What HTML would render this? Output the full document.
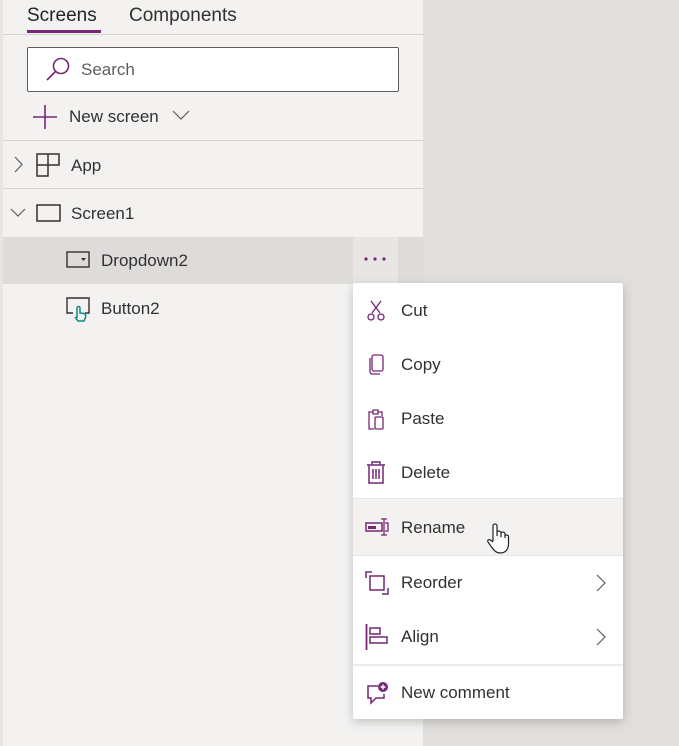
<!DOCTYPE html>
<html><head><style>
*{margin:0;padding:0;box-sizing:border-box}
body{width:679px;height:746px;background:#e1dfdd;font-family:"Liberation Sans",sans-serif;color:#323130;position:relative;overflow:hidden}
.panel{position:absolute;left:0;top:0;width:423px;height:746px;background:#f3f2f1;box-shadow:inset 3px 0 0 #e8e6e4}
.abs{position:absolute}
.t{position:absolute;font-size:17px;line-height:20px}
.hr{position:absolute;left:3px;width:420px;height:1px;background:#d6d4d2}
.menu{position:absolute;left:353px;top:283px;width:270px;height:436px;background:#fff;border-radius:2px;box-shadow:0 3px 10px rgba(0,0,0,.2)}
.mi{position:absolute;left:0;width:270px;font-size:17px}
.mi span{position:absolute;left:48px;line-height:20px}
.mi svg{position:absolute;left:12px}
.mi svg.chev{left:242px}
</style></head><body>
<div class="panel">
 <div class="t" style="left:27px;top:6px;font-size:19px;color:#252423">Screens</div>
 <div class="abs" style="left:27px;top:30px;width:74px;height:3px;background:#742774"></div>
 <div class="t" style="left:129px;top:6px;font-size:19px">Components</div>
 <div class="hr" style="top:34px"></div>
 <div class="abs" style="left:27px;top:47px;width:372px;height:45px;background:#fff;border:1px solid #605e5c;border-radius:2px"></div>
 <svg class="abs" style="left:44px;top:56px" width="30" height="26"><circle cx="17" cy="10" r="7.5" fill="none" stroke="#742774" stroke-width="1.6"/><line x1="11.5" y1="15.5" x2="3" y2="24" stroke="#742774" stroke-width="1.6"/></svg>
 <div class="t" style="left:81px;top:60px;color:#605e5c">Search</div>
 <svg class="abs" style="left:31px;top:103px" width="28" height="28"><path d="M14 2V26M2 14H26" stroke="#742774" stroke-width="1.6"/></svg>
 <div class="t" style="left:69px;top:107px">New screen</div>
 <svg class="abs" style="left:171px;top:108px" width="20" height="14"><path d="M2 3L10 11L18 3" fill="none" stroke="#605e5c" stroke-width="1.2"/></svg>
 <div class="hr" style="top:140px"></div>
 <svg class="abs" style="left:12px;top:155px" width="12" height="20"><path d="M3 2L10 9.5L3 17" fill="none" stroke="#605e5c" stroke-width="1.2"/></svg>
 <svg class="abs" style="left:35px;top:152px" width="26" height="26"><path d="M2 2H24V13H13V24H2ZM2 13H13V2" fill="none" stroke="#323130" stroke-width="1.5"/></svg>
 <div class="t" style="left:71px;top:156px">App</div>
 <div class="hr" style="top:188px"></div>
 <svg class="abs" style="left:9px;top:206px" width="18" height="14"><path d="M2 3L9 10L16 3" fill="none" stroke="#605e5c" stroke-width="1.2"/></svg>
 <svg class="abs" style="left:35px;top:203px" width="28" height="20"><rect x="2" y="2" width="23" height="16" fill="none" stroke="#323130" stroke-width="1.5"/></svg>
 <div class="t" style="left:71px;top:204px">Screen1</div>
 <div class="abs" style="left:3px;top:237px;width:420px;height:47px;background:#dedcda"></div>
 <div class="abs" style="left:353px;top:237px;width:45px;height:47px;background:#e8e6e4"></div>
 <svg class="abs" style="left:362px;top:255px" width="26" height="8"><circle cx="4" cy="4" r="1.6" fill="#742774"/><circle cx="13" cy="4" r="1.6" fill="#742774"/><circle cx="22" cy="4" r="1.6" fill="#742774"/></svg>
 <svg class="abs" style="left:65px;top:250px" width="28" height="20"><rect x="2" y="2" width="22" height="15" fill="none" stroke="#323130" stroke-width="1.4"/><path d="M16 8H21L18.5 11Z" fill="#323130"/></svg>
 <div class="t" style="left:101px;top:251px">Dropdown2</div>
 <svg class="abs" style="left:65px;top:296px" width="28" height="28"><path d="M8 17H2V2H24V17H20" fill="none" stroke="#323130" stroke-width="1.4"/><path d="M12 22V12a1.5 1.5 0 0 1 3 0V17l4 0.5c2 .5 2 2 1.5 4L19 25H13L10 21" fill="none" stroke="#0b8a86" stroke-width="1.5"/></svg>
 <div class="t" style="left:101px;top:299px">Button2</div>
</div>
<div class="menu">
 <div class="abs" style="left:0;top:216px;width:270px;height:56px;background:#f3f2f1"></div>
 <div class="abs" style="left:0;top:215px;width:270px;height:1px;background:#e8e6e4"></div>
 <div class="abs" style="left:0;top:272px;width:270px;height:1px;background:#e8e6e4"></div>
 <div class="abs" style="left:0;top:381px;width:270px;height:2px;background:#edebe9"></div>
 <div class="mi" style="top:17px"><svg width="22" height="22"><path d="M6 1L15 13M16 1L7 13" stroke="#742774" stroke-width="1.3" fill="none"/><circle cx="6" cy="17" r="3" fill="none" stroke="#742774" stroke-width="1.3"/><circle cx="16" cy="17" r="3" fill="none" stroke="#742774" stroke-width="1.3"/></svg><span style="top:1px">Cut</span></div>
 <div class="mi" style="top:71px"><svg width="22" height="22"><rect x="7" y="1" width="11" height="16" rx="2" fill="none" stroke="#742774" stroke-width="1.3"/><path d="M5 4V18a2 2 0 0 0 2 2H15" fill="none" stroke="#742774" stroke-width="1.3"/></svg><span style="top:1px">Copy</span></div>
 <div class="mi" style="top:125px"><svg width="22" height="24"><path d="M8 4H4V21H9M13 4H17V8M8 2H13V6H8Z" fill="none" stroke="#742774" stroke-width="1.3"/><rect x="10" y="9" width="8" height="12" rx="1" fill="none" stroke="#742774" stroke-width="1.3"/></svg><span style="top:1px">Paste</span></div>
 <div class="mi" style="top:178px"><svg width="22" height="24"><path d="M2 4H20M7 4V1H15V4M4 4V22H18V4M8 8V18M11 8V18M14 8V18" fill="none" stroke="#742774" stroke-width="1.5"/></svg><span style="top:2px">Delete</span></div>
 <div class="mi" style="top:234px"><svg width="26" height="22"><rect x="1" y="6" width="16" height="8" fill="none" stroke="#742774" stroke-width="1.5"/><rect x="3" y="9" width="8" height="3" fill="#742774"/><path d="M16 2H22M16 18H22M19 2V18M20 6H23V14H20" fill="none" stroke="#742774" stroke-width="1.3"/></svg><span style="top:1px">Rename</span></div>
 <div class="mi" style="top:288px"><svg width="26" height="26"><path d="M1 7V1H7" fill="none" stroke="#742774" stroke-width="1.5"/><rect x="5" y="5" width="14" height="14" fill="none" stroke="#742774" stroke-width="1.5"/><path d="M17 23H23V17" fill="none" stroke="#742774" stroke-width="1.5"/></svg><span style="top:2px">Reorder</span><svg class="chev" width="12" height="20" style="top:2px"><path d="M2 2L10 10L2 18" fill="none" stroke="#605e5c" stroke-width="1.2"/></svg></div>
 <div class="mi" style="top:341px"><svg width="24" height="26"><path d="M1.5 0V26" stroke="#742774" stroke-width="1.8"/><rect x="5" y="4" width="10" height="6" fill="none" stroke="#742774" stroke-width="1.5"/><rect x="5" y="13" width="17" height="6" fill="none" stroke="#742774" stroke-width="1.5"/></svg><span style="top:3px">Align</span><svg class="chev" width="12" height="20" style="top:3px"><path d="M2 2L10 10L2 18" fill="none" stroke="#605e5c" stroke-width="1.2"/></svg></div>
 <div class="mi" style="top:398px"><svg width="26" height="26"><path d="M13 5H3V17H6V22L11 17H19V13" fill="none" stroke="#742774" stroke-width="1.5"/><circle cx="18" cy="6" r="5" fill="#742774"/><path d="M18 3.5V8.5M15.5 6H20.5" stroke="#fff" stroke-width="1.4"/></svg><span style="top:2px">New comment</span></div>
 <svg class="abs" style="left:132px;top:238px" width="28" height="34"><path d="M8 20V5a2 2 0 0 1 4 0V15M12 12a2 2 0 0 1 4 0V16M16 13a2 2 0 0 1 4 0V17M20 15a2 2 0 0 1 3.5 0V23c0 5-3 9-8 9c-4 0-6-2-9-6L3 21c-1-2 1-3 2.5-2L8 21" fill="#fff" stroke="#222" stroke-width="1.2"/></svg>
</div>
</body></html>
